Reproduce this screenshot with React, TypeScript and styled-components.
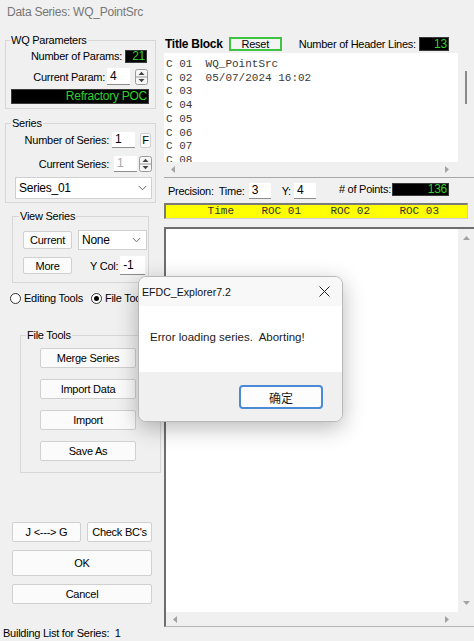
import React from 'react';
import styled, { createGlobalStyle } from 'styled-components';

const GlobalStyle = createGlobalStyle`
  html, body {
    margin: 0;
    padding: 0;
    background: #f0f0f0;
  }
  body {
    font-family: "Liberation Sans", Arial, sans-serif;
    font-size: 11px;
    color: #000;
  }
  * {
    box-sizing: border-box;
  }
`;

const Window = styled.div`
  position: relative;
  width: 474px;
  height: 641px;
  display: flex;
  flex-direction: column;
  overflow: hidden;
  background: #f0f0f0;
  letter-spacing: -0.25px;
`;

const Caption = styled.div`
  height: 30px;
  padding: 5px 0 0 7px;
  font-size: 12px;
  line-height: 14px;
  color: #777;
`;

const Main = styled.div`
  flex: 1;
  display: flex;
  min-height: 0;
`;

const LeftCol = styled.div`
  width: 164px;
  flex-shrink: 0;
  display: flex;
  flex-direction: column;
`;

const Group = styled.div<{ $top: number; $left: number; $width: number; $pad: string }>`
  position: relative;
  margin: ${p => p.$top}px 0 0 ${p => p.$left}px;
  width: ${p => p.$width}px;
  padding: ${p => p.$pad};
  border: 1px solid #d6d6d6;
  display: flex;
  flex-direction: column;
`;

const GroupTitle = styled.span<{ $left: number }>`
  position: absolute;
  top: -8px;
  left: ${p => p.$left}px;
  padding: 0 1px;
  background: #f0f0f0;
  line-height: 14px;
  white-space: nowrap;
`;

const Row = styled.div<{ $h: number; $mt?: number; $justify?: string; $pl?: number }>`
  display: flex;
  align-items: center;
  justify-content: ${p => p.$justify || 'flex-start'};
  height: ${p => p.$h}px;
  margin-top: ${p => p.$mt || 0}px;
  padding-left: ${p => p.$pl || 0}px;
  flex-shrink: 0;
`;

const Label = styled.span<{ $ml?: number; $mr?: number; $w?: number; $bold?: boolean }>`
  margin-left: ${p => p.$ml || 0}px;
  margin-right: ${p => p.$mr || 0}px;
  ${p => (p.$w ? `width: ${p.$w}px;` : '')}
  font-weight: ${p => (p.$bold ? 'bold' : 'normal')};
  font-size: ${p => (p.$bold ? '12px' : '11px')};
  line-height: 14px;
  white-space: nowrap;
  flex-shrink: 0;
`;

const Display = styled.div<{ $w: number; $h: number; $ml?: number; $mr?: number }>`
  width: ${p => p.$w}px;
  height: ${p => p.$h}px;
  margin-left: ${p => p.$ml || 0}px;
  margin-right: ${p => p.$mr || 0}px;
  background: #000;
  border: 1px solid #3a3a3a;
  color: #2fd12f;
  font-size: 12px;
  line-height: ${p => p.$h - 2}px;
  text-align: right;
  padding-right: 1px;
  overflow: hidden;
  white-space: nowrap;
  flex-shrink: 0;
`;

const TextBox = styled.div<{ $w: number; $h: number; $ml?: number; $disabled?: boolean }>`
  width: ${p => p.$w}px;
  height: ${p => p.$h}px;
  margin-left: ${p => p.$ml || 0}px;
  background: #fff;
  border-bottom: 1px solid #8c8c8c;
  padding-left: 3px;
  font-size: 12px;
  line-height: ${p => p.$h - 1}px;
  color: ${p => (p.$disabled ? '#a8a8a8' : '#000')};
  flex-shrink: 0;
`;

const Btn = styled.button<{ $w: number; $h: number; $ml?: number; $mt?: number }>`
  width: ${p => p.$w}px;
  height: ${p => p.$h}px;
  margin: ${p => p.$mt || 0}px 0 0 ${p => p.$ml || 0}px;
  padding: 0;
  background: #fbfbfb;
  border: 1px solid #d0d0d0;
  border-radius: 2px;
  font-family: inherit;
  font-size: 11px;
  letter-spacing: inherit;
  color: #000;
  flex-shrink: 0;
`;

const ResetBtn = styled(Btn)`
  border: 2px solid #3ec43e;
  border-radius: 0;
  background: #f4f4f4;
  line-height: 10px;
`;

const Select = styled.div<{ $w: number; $h: number; $ml?: number; $pl: number; $pr: number }>`
  display: flex;
  align-items: center;
  justify-content: space-between;
  width: ${p => p.$w}px;
  height: ${p => p.$h}px;
  margin-left: ${p => p.$ml || 0}px;
  padding: 0 ${p => p.$pr}px 0 ${p => p.$pl}px;
  background: #fff;
  border: 1px solid #cfcfcf;
  font-size: 12px;
  flex-shrink: 0;
`;

const IconBox = styled.span<{ $ml?: number; $mr?: number }>`
  display: inline-flex;
  margin-left: ${p => p.$ml || 0}px;
  margin-right: ${p => p.$mr || 0}px;
  flex-shrink: 0;
`;

const Radio = styled.span<{ $checked?: boolean; $ml?: number }>`
  position: relative;
  width: 11px;
  height: 11px;
  margin-left: ${p => p.$ml || 0}px;
  margin-right: 3px;
  border-radius: 50%;
  border: 1px solid #333;
  background: #fff;
  flex-shrink: 0;
  &::after {
    content: '';
    display: ${p => (p.$checked ? 'block' : 'none')};
    position: absolute;
    inset: 2px;
    border-radius: 50%;
    background: #000;
  }
`;

const RightCol = styled.div`
  flex: 1;
  min-width: 0;
  display: flex;
  flex-direction: column;
`;

const TitleArea = styled.div`
  margin-top: 1px;
  display: grid;
  grid-template-columns: 1fr 16px;
  grid-template-rows: 109px 15px;
  border-bottom: 1px solid #a8a8a8;
  flex-shrink: 0;
`;

const TitleText = styled.div`
  background: #fff;
  padding: 5px 0 0 2px;
  overflow: hidden;
  font-family: "Liberation Mono", "Courier New", monospace;
  font-size: 11px;
  line-height: 13.7px;
  letter-spacing: 0;
  white-space: pre;
  color: #3a3a3a;
`;

const VScroll = styled.div<{ $pt: number; $pb: number; $start?: boolean }>`
  display: flex;
  flex-direction: column;
  align-items: center;
  justify-content: ${p => (p.$start ? 'flex-start' : 'space-between')};
  padding: ${p => p.$pt}px 0 ${p => p.$pb}px;
  background: #f0f0f0;
`;

const Thumb = styled.div`
  width: 2px;
  height: 33px;
  margin: 18px 1px 0 0;
  background: #8a8a8a;
`;

const HScroll = styled.div`
  display: flex;
  align-items: center;
  justify-content: space-between;
  padding: 0 8px 0 6px;
  background: #f0f0f0;
`;

const Corner = styled.div`
  background: #f0f0f0;
`;

const ColumnHeader = styled.div`
  display: flex;
  width: 304px;
  height: 16px;
  margin-top: 4px;
  background: #ffff00;
  border-top: 2px solid #7a7a7a;
  border-left: 2px solid #7a7a7a;
  border-right: 1px solid #d0d0d0;
  border-bottom: 1px solid #d0d0d0;
  font-family: "Liberation Mono", "Courier New", monospace;
  font-size: 11px;
  line-height: 13px;
  letter-spacing: 0;
  color: #333;
  flex-shrink: 0;
`;

const HeadCell = styled.span<{ $w: number }>`
  width: ${p => p.$w}px;
  text-align: right;
  white-space: pre;
`;

const DataGrid = styled.div`
  flex: 1;
  margin-top: 8px;
  display: grid;
  grid-template-columns: 1fr 16px;
  grid-template-rows: 1fr 14px;
  border-top: 2px solid #6e6e6e;
  border-left: 2px solid #6e6e6e;
  border-bottom: 1px solid #b5b5b5;
`;

const GridBody = styled.div`
  background: #fff;
`;

const StatusBar = styled.div`
  height: 14px;
  padding-left: 3px;
  line-height: 13px;
  white-space: pre;
  flex-shrink: 0;
`;

const Dialog = styled.div`
  position: absolute;
  left: 138px;
  top: 276px;
  width: 205px;
  height: 146px;
  display: flex;
  flex-direction: column;
  border: 1px solid #b8b8b8;
  border-radius: 8px;
  overflow: hidden;
  background: #fff;
  box-shadow: 0 6px 22px rgba(0, 0, 0, 0.28);
  letter-spacing: 0;
  font-family: "Liberation Sans", "Noto Sans CJK SC", sans-serif;
`;

const DialogTitle = styled.div`
  display: flex;
  align-items: center;
  justify-content: space-between;
  height: 29px;
  padding-left: 3px;
  background: #f8f8f8;
  font-size: 10.6px;
  color: #111;
`;

const CloseBox = styled.div`
  width: 36px;
  height: 29px;
  display: flex;
  align-items: center;
  justify-content: center;
`;

const DialogBody = styled.div`
  height: 66px;
  padding: 24px 0 0 11px;
  font-size: 11.5px;
  line-height: 14px;
  white-space: pre;
  color: #1a1a1a;
`;

const DialogFooter = styled.div`
  flex: 1;
  display: flex;
  justify-content: flex-end;
  align-items: flex-start;
  padding: 13px 19px 0 0;
  background: #f0f0f0;
`;

const OkButton = styled.button`
  width: 84px;
  height: 24px;
  padding: 0;
  border: 2px solid #4a8ad6;
  border-radius: 4px;
  background: #fdfdfd;
  font-family: "Liberation Sans", "Noto Sans CJK SC", sans-serif;
  font-size: 12px;
  color: #1b1b1b;
`;

const Spinner = ({ ml }: { ml: number }) => (
  <IconBox $ml={ml}>
    <svg width="13" height="16" viewBox="0 0 13 16">
      <rect x="0.5" y="0.5" width="12" height="15" rx="2" fill="#f6f6f6" stroke="#9a9a9a" />
      <line x1="1" y1="8" x2="12" y2="8" stroke="#9a9a9a" />
      <path d="M3.5 6 L6.5 2.8 L9.5 6 Z" fill="#444" />
      <path d="M3.5 10 L6.5 13.2 L9.5 10 Z" fill="#444" />
    </svg>
  </IconBox>
);

const Chevron = () => (
  <svg width="9" height="6" viewBox="0 0 9 6">
    <path d="M0.8 1 L4.5 4.8 L8.2 1" fill="none" stroke="#6a6a6a" strokeWidth="1" />
  </svg>
);

const Arrow = ({ dir }: { dir: 'up' | 'down' | 'left' | 'right' }) => {
  const d = {
    up: 'M0 5 L3.5 1 L7 5 Z',
    down: 'M0 1 L3.5 5 L7 1 Z',
    left: 'M5 0 L1 3.5 L5 7 Z',
    right: 'M1 0 L5 3.5 L1 7 Z',
  }[dir];
  const vertical = dir === 'up' || dir === 'down';
  return (
    <svg width={vertical ? 7 : 6} height={vertical ? 6 : 7} viewBox={vertical ? '0 0 7 6' : '0 0 6 7'}>
      <path d={d} fill="#a3a3a3" />
    </svg>
  );
};

const headerLines = [
  'C 01  WQ_PointSrc',
  'C 02  05/07/2024 16:02',
  'C 03',
  'C 04',
  'C 05',
  'C 06',
  'C 07',
  'C 08',
];

const fileTools = ['Merge Series', 'Import Data', 'Import', 'Save As'];

export default function App() {
  return (
    <Window>
      <GlobalStyle />
      <Caption>Data Series: WQ_PointSrc</Caption>
      <Main>
        <LeftCol>
          <Group $top={10} $left={5} $width={151} $pad="7px 7px 4px 5px">
            <GroupTitle $left={4}>WQ Parameters</GroupTitle>
            <Row $h={16} $justify="flex-end">
              <Label>Number of Params:</Label>
              <Display $w={22} $h={13} $ml={3} $mr={1}>21</Display>
            </Row>
            <Row $h={17} $mt={4} $justify="flex-end">
              <Label>Current Param:</Label>
              <TextBox $w={23} $h={17} $ml={2}>4</TextBox>
              <Spinner ml={5} />
            </Row>
            <Display $w={138} $h={15} style={{ marginTop: 4 }}>Refractory POC</Display>
          </Group>

          <Group $top={14} $left={5} $width={151} $pad="8px 3px 3px 9px">
            <GroupTitle $left={5}>Series</GroupTitle>
            <Row $h={16} $justify="flex-end">
              <Label>Number of Series:</Label>
              <TextBox $w={23} $h={16} $ml={3}>1</TextBox>
              <Btn $w={11} $h={15} $ml={5} style={{ marginRight: 1 }}>F</Btn>
            </Row>
            <Row $h={16} $mt={8} $justify="flex-end">
              <Label>Current Series:</Label>
              <TextBox $w={23} $h={16} $ml={5} $disabled>1</TextBox>
              <Spinner ml={2} />
            </Row>
            <Row $h={22} $mt={5}>
              <Select $w={137} $h={22} $pl={3} $pr={4}>
                <span>Series_01</span>
                <Chevron />
              </Select>
            </Row>
          </Group>

          <Group $top={13} $left={12} $width={137} $pad="13px 0 7px 10px">
            <GroupTitle $left={6}>View Series</GroupTitle>
            <Row $h={20}>
              <Btn $w={49} $h={18}>Current</Btn>
              <Select $w={69} $h={20} $ml={6} $pl={3} $pr={5}>
                <span>None</span>
                <Chevron />
              </Select>
            </Row>
            <Row $h={19} $mt={6}>
              <Btn $w={49} $h={17}>More</Btn>
              <Label $ml={18}>Y Col:</Label>
              <TextBox $w={25} $h={19} $ml={2}>-1</TextBox>
            </Row>
          </Group>

          <Row $h={14} $mt={8} $pl={10}>
            <Radio />
            <Label>Editing Tools</Label>
            <Radio $checked $ml={8} />
            <Label>File Tools</Label>
          </Row>

          <Group $top={30} $left={20} $width={141} $pad="12px 0 11px 19px">
            <GroupTitle $left={5}>File Tools</GroupTitle>
            {fileTools.map((t, i) => (
              <Btn key={t} $w={96} $h={20} $mt={i === 0 ? 0 : 11}>
                {t}
              </Btn>
            ))}
          </Group>

          <Row $h={20} $mt={49} $pl={12}>
            <Btn $w={69} $h={20}>J &lt;---&gt; G</Btn>
            <Btn $w={65} $h={20} $ml={6}>Check BC's</Btn>
          </Row>
          <Btn $w={140} $h={26} $ml={12} $mt={8}>OK</Btn>
          <Btn $w={140} $h={20} $ml={12} $mt={8}>Cancel</Btn>
        </LeftCol>

        <RightCol>
          <Row $h={16} $mt={6} $pl={1}>
            <Label $bold>Title Block</Label>
            <ResetBtn $w={53} $h={14} $ml={6}>Reset</ResetBtn>
            <Label $ml={17}>Number of Header Lines:</Label>
            <Display $w={30} $h={14} $ml={3}>13</Display>
          </Row>

          <TitleArea>
            <TitleText>{headerLines.join('\n')}</TitleText>
            <VScroll $pt={0} $pb={0} $start>
              <Thumb />
            </VScroll>
            <HScroll>
              <Arrow dir="left" />
              <Arrow dir="right" />
            </HScroll>
            <Corner />
          </TitleArea>

          <Row $h={16} $mt={5} $pl={4}>
            <Label>Precision:</Label>
            <Label $ml={5}>Time:</Label>
            <TextBox $w={22} $h={16} $ml={4}>3</TextBox>
            <Label $ml={11}>Y:</Label>
            <TextBox $w={22} $h={16} $ml={3}>4</TextBox>
            <Label $ml={23} style={{ alignSelf: 'flex-start', marginTop: -1 }}>
              # of Points:
            </Label>
            <Display $w={57} $h={13} $ml={1} style={{ alignSelf: 'flex-start' }}>136</Display>
          </Row>

          <ColumnHeader>
            <HeadCell $w={68}>Time</HeadCell>
            <HeadCell $w={67}>ROC 01</HeadCell>
            <HeadCell $w={69}>ROC 02</HeadCell>
            <HeadCell $w={69}>ROC 03</HeadCell>
          </ColumnHeader>

          <DataGrid>
            <GridBody />
            <VScroll $pt={6} $pb={6}>
              <Arrow dir="up" />
              <Arrow dir="down" />
            </VScroll>
            <HScroll>
              <Arrow dir="left" />
              <Arrow dir="right" />
            </HScroll>
            <Corner />
          </DataGrid>
        </RightCol>
      </Main>
      <StatusBar>Building List for Series:  1</StatusBar>

      <Dialog>
        <DialogTitle>
          <span>EFDC_Explorer7.2</span>
          <CloseBox>
            <svg width="11" height="11" viewBox="0 0 11 11">
              <path d="M0.5 0.5 L10.5 10.5 M10.5 0.5 L0.5 10.5" stroke="#222" strokeWidth="1" />
            </svg>
          </CloseBox>
        </DialogTitle>
        <DialogBody>Error loading series.  Aborting!</DialogBody>
        <DialogFooter>
          <OkButton>确定</OkButton>
        </DialogFooter>
      </Dialog>
    </Window>
  );
}
